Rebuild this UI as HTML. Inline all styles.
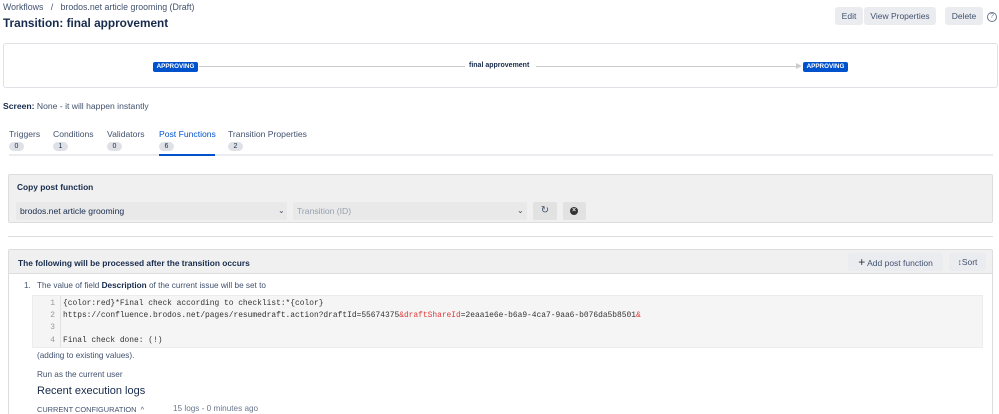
<!DOCTYPE html>
<html><head><meta charset="utf-8"><style>
*{box-sizing:border-box;margin:0;padding:0}
html,body{overflow:hidden}
body{width:999px;height:414px;overflow:hidden;background:#fff;font-family:"Liberation Sans",sans-serif;color:#172b4d;position:relative;font-size:9px}
.a{position:absolute;white-space:nowrap}
.btn{position:absolute;background:#ebecf0;border-radius:3px;color:#42526e;font-size:8.5px;text-align:center;line-height:18px;height:18px}
.loz{position:absolute;background:#0052cc;color:#fff;font-weight:bold;font-size:6.3px;line-height:10px;height:10px;border-radius:2px;text-align:center;width:45px}
.tab{position:absolute;top:129px;color:#42526e;font-size:8.6px}
.bd{position:absolute;top:142px;background:#dfe1e6;border-radius:6px;height:9px;width:15px;font-size:7px;line-height:9px;text-align:center;color:#172b4d}
.sel{position:absolute;top:202px;height:18px;background:#e9e9e9;border-radius:2px;font-size:8.6px;line-height:18px;padding-left:4px}
.chev{position:absolute;top:0;font-size:8px;color:#42526e}
.code{position:absolute;left:32px;top:295px;width:951px;height:53px;background:#f5f5f5;border:1px solid #ececec;font-family:"Liberation Mono",monospace;font-size:7.9px}
.ln{position:absolute;left:12px;width:10px;text-align:right;color:#999}
.cl{position:absolute;left:30px;color:#333;white-space:pre}
.t{font-size:8.2px;color:#42526e}
</style></head><body>
<div class="a" style="left:3px;top:2px;font-size:8.8px;color:#42526e">Workflows &nbsp;&nbsp;/&nbsp;&nbsp; brodos.net article grooming (Draft)</div>
<div class="a" style="left:3px;top:16px;font-size:11.8px;font-weight:bold">Transition: final approvement</div>
<div class="btn" style="left:835px;top:7px;width:28px">Edit</div>
<div class="btn" style="left:864px;top:7px;width:72px">View Properties</div>
<div class="btn" style="left:945px;top:7px;width:38px">Delete</div>
<div class="a" style="left:987px;top:12px;width:10px;height:10px;border:1px solid #6b778c;border-radius:50%;font-size:7px;line-height:8px;text-align:center;color:#6b778c">?</div>

<div class="a" style="left:3px;top:43px;width:995px;height:45px;border:1px solid #dfe1e6;border-radius:3px"></div>
<div class="loz" style="left:153px;top:62px">APPROVING</div>
<div class="a" style="left:199px;top:66px;width:266px;height:1px;background:#ccc"></div>
<div class="a" style="left:469px;top:62px;font-size:7px;font-weight:bold">final approvement</div>
<div class="a" style="left:536px;top:66px;width:261px;height:1px;background:#ccc"></div>
<div class="a" style="left:796px;top:63px;width:0;height:0;border-left:6px solid #ccc;border-top:3.5px solid transparent;border-bottom:3.5px solid transparent"></div>
<div class="loz" style="left:803px;top:62px">APPROVING</div>

<div class="a" style="left:3px;top:101px;font-size:8.6px"><b>Screen:</b> <span style="color:#42526e">None - it will happen instantly</span></div>

<div class="tab" style="left:9px">Triggers</div><div class="bd" style="left:9px">0</div>
<div class="tab" style="left:53px">Conditions</div><div class="bd" style="left:53px">1</div>
<div class="tab" style="left:107px">Validators</div><div class="bd" style="left:107px">0</div>
<div class="tab" style="left:159px;color:#0052cc">Post Functions</div><div class="bd" style="left:159px">6</div>
<div class="tab" style="left:228px">Transition Properties</div><div class="bd" style="left:228px">2</div>
<div class="a" style="left:9px;top:154px;width:984px;height:2px;background:#ebecf0"></div>
<div class="a" style="left:159px;top:154px;width:56px;height:2px;background:#0052cc"></div>

<div class="a" style="left:8px;top:174px;width:985px;height:49px;background:#f0f0f0;border:1px solid #ddd;border-radius:2px"></div>
<div class="a" style="left:17px;top:182px;font-size:8.4px;font-weight:bold">Copy post function</div>
<div class="sel" style="left:16px;width:271px">brodos.net article grooming<span class="chev" style="left:262px">&#8964;</span></div>
<div class="sel" style="left:293px;width:234px;color:#97a0af">Transition (ID)<span class="chev" style="left:224px;color:#42526e">&#8964;</span></div>
<div class="a" style="left:533px;top:202px;width:24px;height:18px;background:#e2e2e2;border-radius:2px;font-size:10px;text-align:center;line-height:18px;color:#42526e">&#x21bb;</div>
<div class="a" style="left:563px;top:202px;width:23px;height:18px;background:#e2e2e2;border-radius:2px"><div style="position:absolute;left:7px;top:5px;width:8px;height:8px;border-radius:50%;background:#333;color:#e2e2e2;font-size:7px;line-height:8px;text-align:center;font-weight:bold">×</div></div>

<div class="a" style="left:8px;top:236px;width:985px;height:1px;background:#ddd"></div>

<div class="a" style="left:8px;top:249px;width:985px;height:175px;border:1px solid #ddd;border-radius:2px"></div>
<div class="a" style="left:9px;top:250px;width:983px;height:24px;background:#f0f0f0;border-bottom:1px solid #ddd"></div>
<div class="a" style="left:18px;top:258px;font-size:8.4px;font-weight:bold">The following will be processed after the transition occurs</div>
<div class="btn" style="left:848px;top:253px;width:95px"><b style="font-size:12px;font-weight:normal;color:#333">+</b> Add post function</div>
<div class="btn" style="left:949px;top:253px;width:37px">&#x2195;Sort</div>

<div class="a t" style="left:24px;top:281px">1.</div>
<div class="a t" style="left:37px;top:281px">The value of field <b style="color:#172b4d">Description</b> of the current issue will be set to</div>
<div class="code">
<div class="a" style="left:27px;top:0;width:1px;height:51px;background:#e2e2e2"></div>
<div class="ln" style="top:3px">1</div><div class="cl" style="top:3px">{color:red}*Final check according to checklist:*{color}</div>
<div class="ln" style="top:15px">2</div><div class="cl" style="top:15px">https://confluence.brodos.net/pages/resumedraft.action?draftId=55674375<span style="color:#e03b3b">&amp;draftShareId</span>=2eaa1e6e-b6a9-4ca7-9aa6-b076da5b8501<span style="color:#e03b3b">&amp;</span></div>
<div class="ln" style="top:27px">3</div>
<div class="ln" style="top:40px">4</div><div class="cl" style="top:40px">Final check done: (!)</div>
</div>
<div class="a t" style="left:37px;top:351px">(adding to existing values).</div>
<div class="a t" style="left:37px;top:370px">Run as the current user</div>
<div class="a" style="left:37px;top:385px;font-size:11px;color:#172b4d">Recent execution logs</div>
<div class="a" style="left:37px;top:405px;font-size:7.4px;color:#42526e">CURRENT CONFIGURATION &nbsp;^</div>
<div class="a t" style="left:173px;top:404px;color:#6b778c">15 logs - 0 minutes ago</div>
</body></html>
